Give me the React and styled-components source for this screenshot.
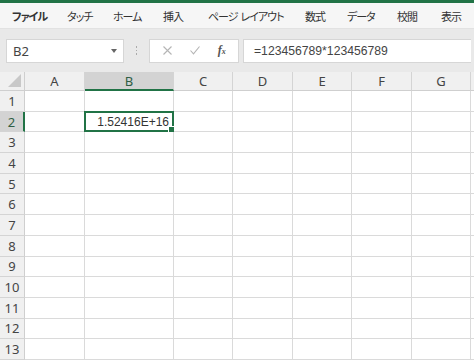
import styled, { createGlobalStyle } from 'styled-components';

const GlobalStyle = createGlobalStyle`
    html, body {
        margin: 0;
        padding: 0;
        background: #ffffff;
        overflow: hidden;
    }
    body {
        font-family: "Open Sans", "Noto Sans CJK JP", sans-serif;
    }
`

const GREEN = '#217346';
const FONT = `"Noto Sans", "Noto Sans CJK JP", sans-serif`;
const CELL_FONT = `"Liberation Sans", Arial, sans-serif`;

const Window = styled.div`
    width: 474px;
    height: 361px;
    display: flex;
    flex-direction: column;
    overflow: hidden;
`

const TitleStrip = styled.div`
    height: 3px;
    background: ${GREEN};
    flex-shrink: 0;
`

const MenuBar = styled.div`
    height: 25px;
    display: flex;
    align-items: center;
    background: #f6f6f6;
    border-bottom: 1px solid #e2e2e2;
    padding-left: 12px;
    flex-shrink: 0;
`

const MenuItem = styled.div`
    width: ${p => p.$width}px;
    flex-shrink: 0;
    font-family: "Noto Sans CJK JP", sans-serif;
    font-feature-settings: "palt";
    font-size: 11px;
    letter-spacing: -1px;
    color: #333;
    font-weight: ${p => (p.$active ? 700 : 400)};
    white-space: pre;
`

const FormulaArea = styled.div`
    height: 43px;
    background: #e9e9e9;
    display: flex;
    align-items: center;
    padding: 0 3px 0 6px;
    flex-shrink: 0;
`

const NameBox = styled.div`
    width: 118px;
    height: 24px;
    background: #fff;
    border: 1px solid #d6d6d6;
    box-sizing: border-box;
    display: flex;
    align-items: center;
    justify-content: space-between;
    padding: 0 6px 0 6px;
    font-family: ${FONT};
    font-size: 13px;
    color: #444;
`

const Caret = styled.span`
    width: 0;
    height: 0;
    border-left: 3.5px solid transparent;
    border-right: 3.5px solid transparent;
    border-top: 4px solid #666;
`

const Grip = styled.div`
    width: 25px;
    display: flex;
    flex-direction: column;
    align-items: center;
    gap: 2px;

    span {
        width: 1.5px;
        height: 1.5px;
        background: #aaa;
    }
`

const FxBox = styled.div`
    width: 90px;
    height: 24px;
    background: #fff;
    border: 1px solid #d6d6d6;
    box-sizing: border-box;
    display: flex;
    align-items: center;
    justify-content: space-around;
    padding: 0 4px;
    margin-right: 4px;
`

const FxText = styled.span`
    font-family: "Liberation Serif", serif;
    font-style: italic;
    font-size: 12px;
    color: #555;
    font-weight: 700;

    sub {
        font-size: 8px;
        vertical-align: baseline;
    }
`

const FormulaInput = styled.div`
    flex: 1;
    height: 24px;
    background: #fff;
    border: 1px solid #d6d6d6;
    border-right: none;
    box-sizing: border-box;
    display: flex;
    align-items: center;
    padding-left: 10px;
    font-family: ${CELL_FONT};
    font-size: 12.2px;
    color: #444;
`

const Sheet = styled.div`
    display: grid;
    grid-template-columns: 25px 60px 89px 59px 60px 59px 60px 59px 1fr;
    grid-auto-rows: 20.7px;
    grid-template-rows: 19px;
`

const Corner = styled.div`
    background: #f0f0f0;
    border-right: 1px solid #cfcfcf;
    border-bottom: 1px solid #cfcfcf;
    box-sizing: border-box;
    display: flex;
    align-items: flex-end;
    justify-content: flex-end;
    padding: 0 3px 3px 0;
`

const CornerMark = styled.span`
    width: 0;
    height: 0;
    border-left: 13px solid transparent;
    border-bottom: 13px solid #c8c8c8;
`

const ColHead = styled.div`
    background: ${p => (p.$selected ? '#d3d3d3' : '#f0f0f0')};
    border-right: 1px solid #d4d4d4;
    border-bottom: ${p => (p.$selected ? `2px solid ${GREEN}` : '1px solid #cfcfcf')};
    box-sizing: border-box;
    display: flex;
    align-items: center;
    justify-content: center;
    font-family: ${FONT};
    font-size: 13px;
    color: ${p => (p.$selected ? '#2f5e44' : '#444')};
`

const RowHead = styled.div`
    background: ${p => (p.$selected ? '#d3d3d3' : '#f0f0f0')};
    border-right: ${p => (p.$selected ? `2px solid ${GREEN}` : '1px solid #cfcfcf')};
    border-bottom: 1px solid #d4d4d4;
    box-sizing: border-box;
    display: flex;
    align-items: center;
    justify-content: center;
    font-family: ${FONT};
    font-size: 13px;
    color: ${p => (p.$selected ? '#2f5e44' : '#444')};
`

const Cell = styled.div`
    position: relative;
    border-right: 1px solid #dadada;
    border-bottom: 1px solid #dadada;
    box-sizing: border-box;
    display: flex;
    align-items: center;
    justify-content: flex-end;
    padding-right: 4px;
    font-family: ${CELL_FONT};
    font-size: 12px;
    color: #333;
    white-space: nowrap;
`

const ActiveFrame = styled.div`
    position: absolute;
    left: -1px;
    top: -1px;
    right: -1px;
    bottom: -1px;
    border: 2px solid ${GREEN};
    pointer-events: none;
`

const Handle = styled.span`
    position: absolute;
    right: -3px;
    bottom: -3px;
    width: 5px;
    height: 5px;
    background: ${GREEN};
    border: 1px solid #fff;
`

const menu = [
    { label: 'ファイル', width: 55, active: true },
    { label: 'タッチ', width: 46 },
    { label: 'ホーム', width: 50 },
    { label: '挿入', width: 45 },
    { label: 'ページ  レイアウト', width: 97 },
    { label: '数式', width: 42 },
    { label: 'データ', width: 50 },
    { label: '校閲', width: 44 },
    { label: '表示', width: 30 },
];

const cols = ['A', 'B', 'C', 'D', 'E', 'F', 'G', ''];

const X = () => (
    <svg width="11" height="11" viewBox="0 0 11 11">
        <path d="M1.5 1.5 L9.5 9.5 M9.5 1.5 L1.5 9.5" stroke="#b5b5b5" strokeWidth="1.1" />
    </svg>
);

const Check = () => (
    <svg width="12" height="11" viewBox="0 0 12 11">
        <path d="M1.5 5.5 L4.5 8.8 L10.5 1.5" stroke="#b5b5b5" strokeWidth="1.1" fill="none" />
    </svg>
);

const App = () => {
    const rows = Array.from({ length: 13 }, (_, i) => i + 1);

    return (
        <Window>
            <GlobalStyle />
            <TitleStrip />
            <MenuBar>
                {menu.map(m => (
                    <MenuItem key={m.label} $active={m.active} $width={m.width}>{m.label}</MenuItem>
                ))}
            </MenuBar>
            <FormulaArea>
                <NameBox>
                    B2
                    <Caret />
                </NameBox>
                <Grip><span /><span /><span /></Grip>
                <FxBox>
                    <X />
                    <Check />
                    <FxText>f<sub>x</sub></FxText>
                </FxBox>
                <FormulaInput>=123456789*123456789</FormulaInput>
            </FormulaArea>
            <Sheet>
                <Corner><CornerMark /></Corner>
                {cols.map((c, i) => (
                    <ColHead key={i} $selected={c === 'B'}>{c}</ColHead>
                ))}
                {rows.map(r => (
                    <>
                        <RowHead key={`h${r}`} $selected={r === 2}>{r}</RowHead>
                        {cols.map((c, i) => (
                            <Cell key={`${r}-${i}`}>
                                {r === 2 && c === 'B' && (
                                    <>
                                        1.52416E+16
                                        <ActiveFrame><Handle /></ActiveFrame>
                                    </>
                                )}
                            </Cell>
                        ))}
                    </>
                ))}
            </Sheet>
        </Window>
    );
}

export default App;
